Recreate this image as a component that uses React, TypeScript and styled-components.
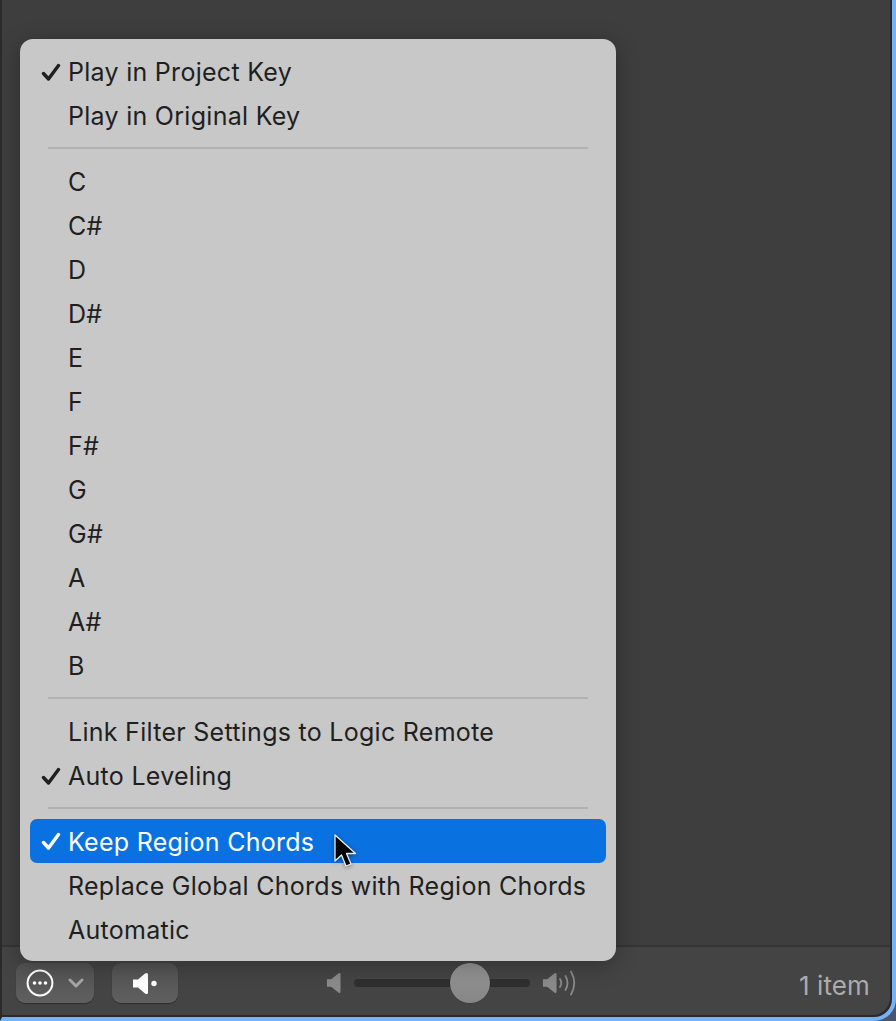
import styled, { createGlobalStyle } from 'styled-components';

const Global = createGlobalStyle`
  html, body {
    margin: 0;
    padding: 0;
    background: #4a5670;
  }
`;

const Desktop = styled.div`
  position: relative;
  width: 896px;
  height: 1021px;
  overflow: hidden;
  font-family: Inter, "Liberation Sans", sans-serif;
`;

const Win = styled.div`
  box-sizing: border-box;
  width: 896px;
  height: 1021px;
  padding: 0 2px 2px 0;
  display: flex;
  flex-direction: column;
  background: #2a2a2a;
  border-left: 2px solid #2b2b2b;
  border-right: 4px solid #76b2f8;
  border-bottom: 4px solid #76b2f8;
  border-bottom-right-radius: 22px;
  overflow: hidden;
`;

const Content = styled.div`
  flex: 1;
  background: #3e3e3e;
`;

const Footer = styled.div`
  box-sizing: border-box;
  height: 70px;
  display: flex;
  align-items: flex-start;
  padding: 16px 20px 0 14px;
  background: #444444;
  border-top: 2px solid #343434;
  border-bottom-right-radius: 17px;
  color: #ababab;
`;

const ToolButton = styled.div<{ $width: number }>`
  box-sizing: border-box;
  width: ${(p) => p.$width}px;
  height: 40px;
  margin-right: 18px;
  display: flex;
  align-items: center;
  justify-content: center;
  gap: 14px;
  border-radius: 9px;
  background: linear-gradient(#525252, #5f5f5f);
  box-shadow: 0 1px 1px rgba(0, 0, 0, 0.35);
`;

const Volume = styled.div`
  display: flex;
  align-items: center;
  height: 40px;
  margin-left: 130px;
`;

const Track = styled.div`
  width: 176px;
  height: 8px;
  margin: 0 12px 0 13px;
  display: flex;
  align-items: center;
  border-radius: 4px;
  background: #2f2f2f;
`;

const Knob = styled.div`
  width: 40px;
  height: 40px;
  margin-left: 96px;
  flex: none;
  border-radius: 50%;
  background: linear-gradient(#959595, #868686);
  box-shadow: 0 0 1px rgba(0, 0, 0, 0.5);
`;

const ItemCount = styled.div`
  margin-left: auto;
  margin-top: 3px;
  font-size: 26px;
  line-height: 40px;
  letter-spacing: 0.1px;
`;

const Menu = styled.div`
  position: absolute;
  left: 20px;
  top: 39px;
  box-sizing: border-box;
  width: 596px;
  height: 922px;
  padding: 11px 10px 9px;
  background: #c8c8c8;
  border-radius: 13px;
  box-shadow: 0 4px 22px rgba(0, 0, 0, 0.28);
  color: #1f1f1f;
`;

const Row = styled.div<{ $active?: boolean }>`
  position: relative;
  height: 44px;
  margin-top: ${(p) => (p.$active ? -1 : 0)}px;
  margin-bottom: ${(p) => (p.$active ? 1 : 0)}px;
  padding-left: 38px;
  border-radius: 7px;
  font-size: 25px;
  line-height: ${(p) => (p.$active ? 46 : 44)}px;
  letter-spacing: 0.28px;
  white-space: nowrap;
  color: ${(p) => (p.$active ? '#fff' : 'inherit')};
  background: ${(p) => (p.$active ? '#0a72e0' : 'transparent')};
`;

const Check = styled.svg`
  position: absolute;
  left: 11px;
  top: 13px;
  width: 20px;
  height: 18px;
`;

const Separator = styled.div`
  height: 2px;
  margin: 9px 18px 11px;
  background: #b2b2b2;
`;

const Pointer = styled.svg`
  position: absolute;
  left: 332px;
  top: 833px;
  width: 28px;
  height: 38px;
  filter: drop-shadow(0 1px 2px rgba(0, 0, 0, 0.4));
`;

const CheckMark = () => (
  <Check viewBox="0 0 20 18" fill="none" stroke="currentColor" strokeWidth="3.4" strokeLinecap="round" strokeLinejoin="round">
    <path d="M2.5 10.5 L7.5 16 L17.5 2.5" />
  </Check>
);

const SpeakerShape = ({ width, fill }: { width: number; fill: string }) => (
  <svg width={width} height="24" viewBox="0 0 16 24">
    <path d="M1 8 H5.5 L13.5 1.5 Q15.5 0.5 15.5 3 V21 Q15.5 23.5 13.5 22.5 L5.5 16 H1 Z" fill={fill} />
  </svg>
);

const keys = ['C', 'C#', 'D', 'D#', 'E', 'F', 'F#', 'G', 'G#', 'A', 'A#', 'B'];

export default function App() {
  return (
    <Desktop>
      <Global />
      <Win>
        <Content />
        <Footer>
          <ToolButton $width={78}>
            <svg width="28" height="28" viewBox="0 0 28 28" fill="none">
              <circle cx="14" cy="14" r="12.4" stroke="#fff" strokeWidth="2" />
              <circle cx="8.5" cy="14" r="1.8" fill="#fff" />
              <circle cx="14" cy="14" r="1.8" fill="#fff" />
              <circle cx="19.5" cy="14" r="1.8" fill="#fff" />
            </svg>
            <svg width="16" height="10" viewBox="0 0 16 10" fill="none" stroke="#a5a5a5" strokeWidth="3" strokeLinecap="round" strokeLinejoin="round">
              <path d="M2 2 L8 8 L14 2" />
            </svg>
          </ToolButton>
          <ToolButton $width={66}>
            <svg width="24" height="23" viewBox="0 0 24 23" fill="#fff">
              <path d="M0 7.5 H5 L12 1.5 Q15 0 15 2.5 V20.5 Q15 23 12 21.5 L5 15.5 H0 Z" />
              <circle cx="21" cy="11.5" r="2.7" />
            </svg>
          </ToolButton>
          <Volume>
            <SpeakerShape width={15} fill="#8a8a8a" />
            <Track>
              <Knob />
            </Track>
            <SpeakerShape width={15} fill="#8a8a8a" />
            <svg width="21" height="26" viewBox="0 0 21 26" fill="none" stroke="#8a8a8a" strokeWidth="1.8" strokeLinecap="round">
              <path d="M3 9 Q5.5 13 3 17" />
              <path d="M8.5 6 Q12.5 13 8.5 20" />
              <path d="M14 1.5 Q20.5 13 14 24.5" />
            </svg>
          </Volume>
          <ItemCount>1 item</ItemCount>
        </Footer>
      </Win>
      <Menu>
        <Row><CheckMark />Play in Project Key</Row>
        <Row>Play in Original Key</Row>
        <Separator />
        {keys.map((k) => (
          <Row key={k}>{k}</Row>
        ))}
        <Separator />
        <Row>Link Filter Settings to Logic Remote</Row>
        <Row><CheckMark />Auto Leveling</Row>
        <Separator />
        <Row $active><CheckMark />Keep Region Chords</Row>
        <Row>Replace Global Chords with Region Chords</Row>
        <Row>Automatic</Row>
      </Menu>
      <Pointer viewBox="0 0 28 38">
        <path d="M3 2 L3 28 L9.5 22 L14 33 L19 31 L14.5 20.5 L23.5 20.5 Z" fill="#000" stroke="#e8eef6" strokeWidth="1.3" strokeLinejoin="round" />
      </Pointer>
    </Desktop>
  );
}
